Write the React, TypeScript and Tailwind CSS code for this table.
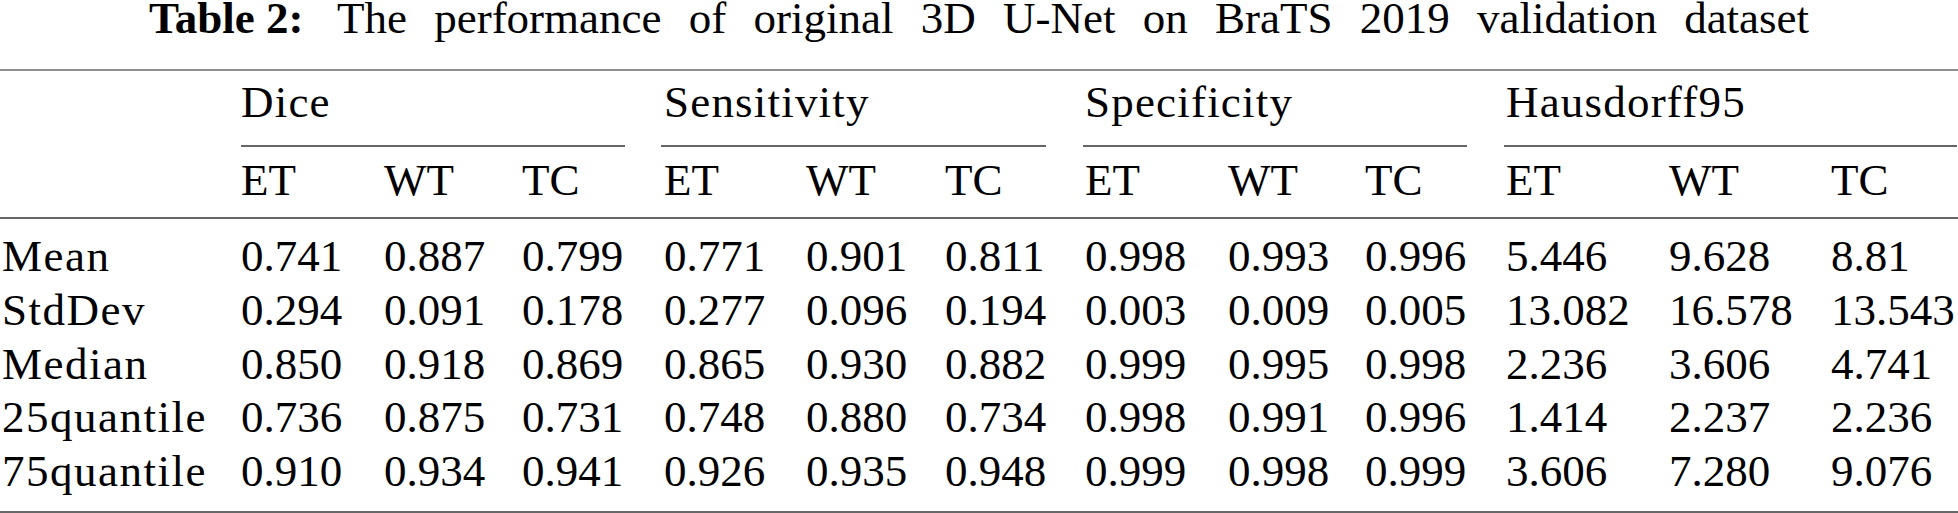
import React from 'react';

const COLS =
  'grid grid-cols-[241px_143px_138px_142px_142px_139px_140px_143px_137px_141px_163px_162px_127px] whitespace-nowrap';

const groups = ['Dice', 'Sensitivity', 'Specificity', 'Hausdorff95'];
const subs = ['ET', 'WT', 'TC'];

const rows: { label: string; values: string[] }[] = [
  {
    label: 'Mean',
    values: ['0.741', '0.887', '0.799', '0.771', '0.901', '0.811', '0.998', '0.993', '0.996', '5.446', '9.628', '8.81'],
  },
  {
    label: 'StdDev',
    values: ['0.294', '0.091', '0.178', '0.277', '0.096', '0.194', '0.003', '0.009', '0.005', '13.082', '16.578', '13.543'],
  },
  {
    label: 'Median',
    values: ['0.850', '0.918', '0.869', '0.865', '0.930', '0.882', '0.999', '0.995', '0.998', '2.236', '3.606', '4.741'],
  },
  {
    label: '25quantile',
    values: ['0.736', '0.875', '0.731', '0.748', '0.880', '0.734', '0.998', '0.991', '0.996', '1.414', '2.237', '2.236'],
  },
  {
    label: '75quantile',
    values: ['0.910', '0.934', '0.941', '0.926', '0.935', '0.948', '0.999', '0.998', '0.999', '3.606', '7.280', '9.076'],
  },
];

export default function App() {
  return (
    <div className="w-[1958px] h-[513px] overflow-hidden bg-white text-black font-['Liberation_Serif'] text-[45px]">
      {/* Caption */}
      <div className="text-center leading-[36px] whitespace-nowrap">
        <span className="font-bold">Table 2:</span>
        <span className="ml-[7px] [word-spacing:16px]"> The performance of original 3D U-Net on BraTS 2019 validation dataset</span>
      </div>

      {/* Top rule */}
      <div className="mt-[33px] h-[2px] bg-[#8f8f8f]" />

      {/* Group headers */}
      <div className={`${COLS} h-[74px] leading-[62px]`}>
        <div />
        {groups.map((g) => (
          <div key={g} className="col-span-3 tracking-[1.2px]">
            {g}
          </div>
        ))}
      </div>

      {/* cmidrules */}
      <div className={`${COLS} h-[2px]`}>
        <div />
        <div className="col-span-3 mr-[39px] bg-[#666]" />
        <div className="col-span-3 -ml-[3px] mr-[39px] bg-[#666]" />
        <div className="col-span-3 -ml-[2px] mr-[39px] bg-[#666]" />
        <div className="col-span-3 -ml-[2px] mr-[1px] bg-[#666]" />
      </div>

      {/* Sub headers */}
      <div className={`${COLS} leading-[66px]`}>
        <div />
        {groups.map((g) =>
          subs.map((s) => <div key={g + s}>{s}</div>)
        )}
      </div>

      {/* Mid rule */}
      <div className="mt-[4px] h-[2px] bg-[#666]" />

      {/* Body */}
      <div className="pt-[11px]">
        {rows.map((r) => (
          <div key={r.label} className={`${COLS} leading-[53.75px]`}>
            <div className="pl-[2px] tracking-[1.5px]">{r.label}</div>
            {r.values.map((v, i) => (
              <div key={i}>{v}</div>
            ))}
          </div>
        ))}
      </div>

      {/* Bottom rule */}
      <div className="mt-[12px] h-[2px] bg-[#666]" />
    </div>
  );
}
